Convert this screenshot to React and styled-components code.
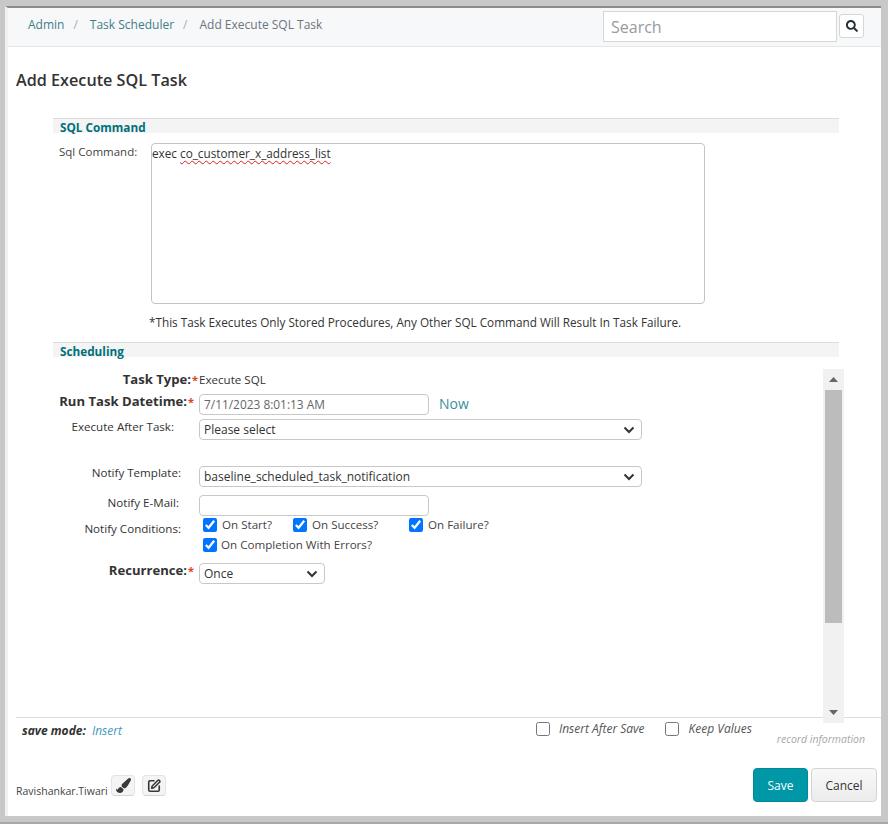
import React from 'react';
import styled, { createGlobalStyle } from 'styled-components';
import { FaPaintBrush, FaSearch } from 'react-icons/fa';
import { SquarePen } from 'lucide-react';

const GlobalStyle = createGlobalStyle`
  html, body {
    margin: 0;
    padding: 0;
    background: #c8c8c8;
  }
  * {
    box-sizing: border-box;
  }
  body {
    font-family: "Open Sans", "Liberation Sans", sans-serif;
    color: #333;
  }
`;

const chevron =
  "data:image/svg+xml,%3Csvg xmlns='http://www.w3.org/2000/svg' width='12' height='8' viewBox='0 0 12 8'%3E%3Cpath d='M1.5 1.5L6 6l4.5-4.5' fill='none' stroke='%23333' stroke-width='2'/%3E%3C/svg%3E";

const Frame = styled.div`
  width: 888px;
  height: 824px;
  padding: 6px 7px 6px 5px;
  background: #c8c8c8;
  border-bottom: 2px solid #a8a8a8;
`;

const Window = styled.div`
  height: 100%;
  display: flex;
  flex-direction: column;
  background: #fff;
  border-top: 2px solid #8a8a8a;
  border-left: 3px solid #f1f1f1;
`;

const TopBar = styled.div`
  height: 39px;
  flex: none;
  display: flex;
  align-items: center;
  justify-content: space-between;
  padding: 0 17px 0 20px;
  background: #f7f8f9;
  border-bottom: 1px solid #e4e6e8;
`;

const Crumbs = styled.nav`
  display: flex;
  align-items: center;
  gap: 9px;
  margin-top: -6px;
  font-size: 12px;
`;

const Crumb = styled.span`
  color: ${(props) => (props.$active ? '#6c757d' : '#3f7f88')};
`;

const Slash = styled.span`
  margin-right: 3px;
  color: #a9afb4;
`;

const SearchBox = styled.div`
  display: flex;
  align-items: center;
  gap: 2px;
  margin-top: -2px;
`;

const SearchInput = styled.input`
  width: 234px;
  height: 31px;
  padding: 1px 7px 0;
  border: 1px solid #d6d6d6;
  background: #fff;
  font: 16px "Open Sans", sans-serif;
  outline: none;
  &::placeholder {
    color: #9a9a9a;
    opacity: 1;
  }
`;

const SearchButton = styled.button`
  width: 25px;
  height: 24px;
  padding: 0;
  display: flex;
  align-items: center;
  justify-content: center;
  border: 1px solid #d6d6d6;
  border-radius: 3px;
  background: #fff;
  color: #222b36;
  font-size: 12px;
`;

const Title = styled.h1`
  margin: 22px 0 0 8px;
  font-size: 16.2px;
  line-height: 22px;
  font-weight: 600;
  color: #333;
`;

const SectionBar = styled.div`
  height: 15px;
  margin: ${(props) => props.$top}px 42px 0 45px;
  padding-left: 7px;
  border-top: 1px solid #dcdcdc;
  background: #f4f4f4;
  color: #00707a;
  font-size: 11.75px;
  font-weight: 700;
  line-height: 17px;
`;

const CommandRow = styled.div`
  display: flex;
  margin: 10px 0 0 51px;
`;

const CommandLabel = styled.label`
  width: 92px;
  margin-top: 1px;
  font-size: 11.5px;
  color: #444;
`;

const CommandBox = styled.div`
  width: 554px;
  height: 161px;
  padding: 1px 0;
  border: 1px solid #c4c4c4;
  border-radius: 4px;
  font-size: 11.75px;
  line-height: 16px;
  color: #333;
`;

const Misspelled = styled.span`
  text-decoration: underline wavy #e02020 1px;
  text-underline-offset: 2px;
`;

const Note = styled.p`
  margin: 10px 0 0 141px;
  font-size: 11.75px;
  line-height: 16px;
  color: #333;
`;

const Schedule = styled.div`
  flex: 1;
  min-height: 0;
  display: flex;
  margin-top: 12px;
  padding-right: 37px;
`;

const Form = styled.div`
  flex: 1;
  display: flex;
  flex-direction: column;
`;

const Row = styled.div`
  display: flex;
  align-items: flex-start;
  margin-top: ${(props) => props.$top}px;
`;

const Label = styled.label`
  width: 191px;
  flex: none;
  text-align: right;
  padding-right: ${(props) => props.$inset || 0}px;
  margin-top: ${(props) => props.$shift || 0}px;
  font-size: ${(props) => (props.$strong ? '13.1px' : '11.6px')};
  font-weight: ${(props) => (props.$strong ? 700 : 400)};
  line-height: 17px;
  color: #333;
  white-space: nowrap;
`;

const Required = styled.span`
  color: #e2401c;
  font-weight: 700;
  font-size: 11px;
  margin-left: 1px;
`;

const Value = styled.span`
  font-size: 11.6px;
  line-height: 17px;
  color: #333;
`;

const TextInput = styled.input`
  width: 230px;
  height: 21px;
  padding: 0 4px 2px;
  border: 1px solid #c8c8c8;
  border-radius: 4px;
  background: #fff;
  color: #666;
  font: 11.9px "Open Sans", sans-serif;
  outline: none;
`;

const Select = styled.select`
  width: ${(props) => props.$width}px;
  height: 21px;
  padding: 0 0 0 4px;
  border: 1px solid #c8c8c8;
  border-radius: 4px;
  appearance: none;
  background: #fff url("${chevron}") no-repeat right 6px center;
  color: #333;
  font: 12px "Open Sans", sans-serif;
`;

const NowLink = styled.a`
  margin-left: 10px;
  color: #3a8f9c;
  font-size: 14px;
  line-height: 19px;
`;

const Checks = styled.div`
  display: flex;
  flex-direction: column;
  gap: 6px;
  padding-left: 4px;
`;

const CheckLine = styled.div`
  display: flex;
`;

const CheckItem = styled.label`
  width: ${(props) => props.$width}px;
  display: flex;
  align-items: center;
  gap: ${(props) => props.$gap}px;
  font-size: 11.6px;
  line-height: 14px;
  color: #444;
  white-space: nowrap;
`;

const Check = styled.input.attrs({ type: 'checkbox' })`
  width: 14px;
  height: 14px;
  margin: 0;
  flex: none;
`;

const Scrollbar = styled.div`
  width: 21px;
  flex: none;
  display: flex;
  flex-direction: column;
  align-items: center;
  margin-bottom: -6px;
  position: relative;
  z-index: 1;
  background: #f1f1f1;
`;

const ScrollArrow = styled.div`
  height: 21px;
  flex: none;
  display: flex;
  align-items: center;
  justify-content: center;
  color: #666;
`;

const ScrollThumb = styled.div`
  width: 17px;
  height: 233px;
  flex: none;
  background: #bcbcbc;
`;

const ScrollRest = styled.div`
  flex: 1;
`;

const Footer = styled.footer`
  flex: none;
  height: 99px;
  margin-left: 8px;
  border-top: 1px solid #dcdcdc;
  display: flex;
  flex-direction: column;
  justify-content: space-between;
  padding-bottom: 14px;
`;

const FooterTop = styled.div`
  display: flex;
  justify-content: space-between;
  padding: 4px 16px 0 6px;
`;

const SaveMode = styled.div`
  display: flex;
  gap: 6px;
  font-size: 12px;
  line-height: 18px;
  font-style: italic;
`;

const SaveModeLabel = styled.b`
  color: #333;
`;

const SaveModeValue = styled.span`
  color: #3c9ac0;
`;

const FooterOptions = styled.div`
  display: flex;
  align-items: flex-start;
`;

const Option = styled.label`
  display: flex;
  align-items: center;
  gap: ${(props) => props.$gap}px;
  margin-right: ${(props) => props.$right}px;
  font-size: 12px;
  line-height: 14px;
  font-style: italic;
  color: #555;
  white-space: nowrap;
`;

const RecordInfo = styled.span`
  margin-top: 10px;
  font-size: 10.5px;
  line-height: 14px;
  font-style: italic;
  color: #a8a8a8;
  white-space: nowrap;
`;

const FooterBottom = styled.div`
  display: flex;
  align-items: flex-end;
  justify-content: space-between;
  padding-right: 4px;
`;

const UserBlock = styled.div`
  display: flex;
  align-items: flex-start;
  margin-bottom: 3px;
`;

const UserName = styled.span`
  width: 95px;
  margin-top: 9px;
  font-size: 10.5px;
  line-height: 15px;
  color: #444;
`;

const IconButton = styled.button`
  width: 24px;
  height: 21px;
  margin-right: 7px;
  padding: 0;
  display: flex;
  align-items: center;
  justify-content: center;
  border: 1px solid #e4e4e4;
  border-bottom-color: #d4d4d4;
  border-radius: 4px;
  background: #f4f4f4;
  color: #3a3a3a;
  font-size: 15px;
`;

const Actions = styled.div`
  display: flex;
  gap: 3px;
`;

const ActionButton = styled.button`
  width: ${(props) => props.$width}px;
  height: 34px;
  padding: 0;
  border-radius: 4px;
  font: 12px "Open Sans", sans-serif;
  border: 1px solid ${(props) => (props.$primary ? '#008a99' : '#d4d4d4')};
  background: ${(props) => (props.$primary ? '#0097a7' : 'linear-gradient(#f8f8f8, #ececec)')};
  color: ${(props) => (props.$primary ? '#fff' : '#333')};
`;

const ArrowGlyph = ({ up }) => (
  <svg width="9" height="5" viewBox="0 0 9 5">
    <path d={up ? 'M4.5 0L9 5H0z' : 'M0 0h9L4.5 5z'} fill="currentColor" />
  </svg>
);

const App = () => (
  <>
    <GlobalStyle />
    <Frame>
      <Window>
        <TopBar>
          <Crumbs>
            <Crumb>Admin</Crumb>
            <Slash>/</Slash>
            <Crumb>Task Scheduler</Crumb>
            <Slash>/</Slash>
            <Crumb $active>Add Execute SQL Task</Crumb>
          </Crumbs>
          <SearchBox>
            <SearchInput placeholder="Search" />
            <SearchButton type="button">
              <FaSearch />
            </SearchButton>
          </SearchBox>
        </TopBar>

        <Title>Add Execute SQL Task</Title>

        <SectionBar $top={27}>SQL Command</SectionBar>
        <CommandRow>
          <CommandLabel>Sql Command:</CommandLabel>
          <CommandBox>
            exec <Misspelled>co_customer_x_address_list</Misspelled>
          </CommandBox>
        </CommandRow>
        <Note>*This Task Executes Only Stored Procedures, Any Other SQL Command Will Result In Task Failure.</Note>

        <SectionBar $top={12}>Scheduling</SectionBar>
        <Schedule>
          <Form>
            <Row $top={2}>
              <Label $strong $inset={1}>
                Task Type:<Required>*</Required>
              </Label>
              <Value>Execute SQL</Value>
            </Row>
            <Row $top={6}>
              <Label $strong $inset={5} $shift={-1}>
                Run Task Datetime:<Required>*</Required>
              </Label>
              <TextInput defaultValue="7/11/2023 8:01:13 AM" />
              <NowLink>Now</NowLink>
            </Row>
            <Row $top={4}>
              <Label $inset={25} $shift={-1}>
                Execute After Task:
              </Label>
              <Select $width={443} defaultValue="">
                <option value="">Please select</option>
              </Select>
            </Row>
            <Row $top={26}>
              <Label $inset={18} $shift={-2}>
                Notify Template:
              </Label>
              <Select $width={443} defaultValue="baseline">
                <option value="baseline">baseline_scheduled_task_notification</option>
              </Select>
            </Row>
            <Row $top={8}>
              <Label $inset={20} $shift={-1}>
                Notify E-Mail:
              </Label>
              <TextInput />
            </Row>
            <Row $top={2}>
              <Label $inset={18} $shift={2}>
                Notify Conditions:
              </Label>
              <Checks>
                <CheckLine>
                  <CheckItem $width={90} $gap={5}>
                    <Check defaultChecked />
                    On Start?
                  </CheckItem>
                  <CheckItem $width={116} $gap={5}>
                    <Check defaultChecked />
                    On Success?
                  </CheckItem>
                  <CheckItem $width={100} $gap={5}>
                    <Check defaultChecked />
                    On Failure?
                  </CheckItem>
                </CheckLine>
                <CheckLine>
                  <CheckItem $width={200} $gap={4}>
                    <Check defaultChecked />
                    On Completion With Errors?
                  </CheckItem>
                </CheckLine>
              </Checks>
            </Row>
            <Row $top={11}>
              <Label $strong $inset={5} $shift={-1}>
                Recurrence:<Required>*</Required>
              </Label>
              <Select $width={126} defaultValue="once">
                <option value="once">Once</option>
              </Select>
            </Row>
          </Form>
          <Scrollbar>
            <ScrollArrow>
              <ArrowGlyph up />
            </ScrollArrow>
            <ScrollThumb />
            <ScrollRest />
            <ScrollArrow>
              <ArrowGlyph />
            </ScrollArrow>
          </Scrollbar>
        </Schedule>

        <Footer>
          <FooterTop>
            <SaveMode>
              <SaveModeLabel>save mode:</SaveModeLabel>
              <SaveModeValue>Insert</SaveModeValue>
            </SaveMode>
            <FooterOptions>
              <Option $gap={9} $right={20}>
                <Check />
                Insert After Save
              </Option>
              <Option $gap={10} $right={25}>
                <Check />
                Keep Values
              </Option>
              <RecordInfo>record information</RecordInfo>
            </FooterOptions>
          </FooterTop>
          <FooterBottom>
            <UserBlock>
              <UserName>Ravishankar.Tiwari</UserName>
              <IconButton type="button">
                <FaPaintBrush />
              </IconButton>
              <IconButton type="button">
                <SquarePen size={14} strokeWidth={2.8} />
              </IconButton>
            </UserBlock>
            <Actions>
              <ActionButton type="button" $primary $width={55}>
                Save
              </ActionButton>
              <ActionButton type="button" $width={66}>
                Cancel
              </ActionButton>
            </Actions>
          </FooterBottom>
        </Footer>
      </Window>
    </Frame>
  </>
);

export default App;
